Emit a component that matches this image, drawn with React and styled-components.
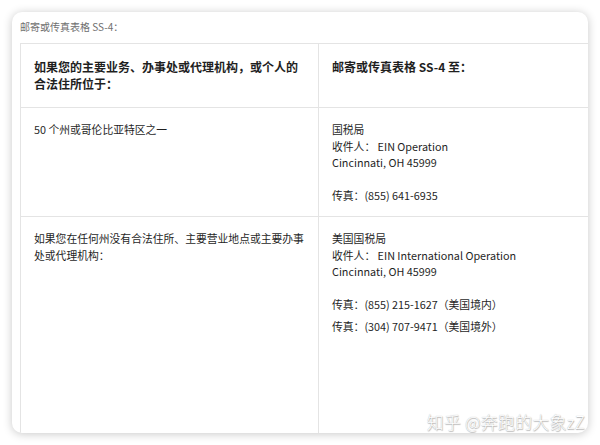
import React from "react";
import styled, { createGlobalStyle } from "styled-components";

const Global = createGlobalStyle`
  html, body { margin: 0; padding: 0; background: #ffffff; }
  body { font-family: "Noto Sans CJK SC", "Noto Sans", sans-serif; color: #1f1f1f; }
`;

const Page = styled.div`
  width: 600px;
  height: 445px;
  padding: 12px;
  box-sizing: border-box;
`;

const Card = styled.div`
  position: relative;
  height: 421px;
  border-radius: 10px;
  background: #fff;
  box-shadow: 0 1px 10px rgba(0, 0, 0, 0.22);
  overflow: hidden;
  display: flex;
  flex-direction: column;
  padding-left: 8px;
`;

const Caption = styled.div`
  font-size: 10px;
  line-height: 14px;
  color: #6f6f6f;
  padding: 8px 0 9px 0;
`;

const Table = styled.div`
  flex: 1;
  display: grid;
  grid-template-columns: 298px 1fr;
  grid-template-rows: 64px 109px 1fr;
`;

const Cell = styled.div`
  border-left: 1px solid #e4e4e4;
  border-top: 1px solid #e4e4e4;
  padding: ${(p) => (p.$head ? "14px 14px 0 13px" : "13px 14px 0 13px")};
  font-size: ${(p) => (p.$head ? "12px" : "10.8px")};
  font-weight: ${(p) => (p.$head ? 700 : 400)};
  line-height: ${(p) => (p.$head ? "17px" : "16.5px")};
  color: #1f1f1f;
`;

const Para = styled.p`
  margin: 0 0 ${(p) => p.$gap || 0}px 0;
`;

const Watermark = styled.div`
  position: absolute;
  right: 3px;
  bottom: 1px;
  font-size: 17px;
  line-height: 20px;
  font-weight: 300;
  color: #ffffff;
  letter-spacing: 0.2px;
  text-shadow: 0 0 1px #a8a8a8, 0.5px 0.5px 1px rgba(0, 0, 0, 0.3);
`;

export default function App() {
  return (
    <>
      <Global />
      <Page>
        <Card>
          <Caption>邮寄或传真表格 SS-4：</Caption>
          <Table>
            <Cell $head>如果您的主要业务、办事处或代理机构，或个人的合法住所位于：</Cell>
            <Cell $head>邮寄或传真表格 SS-4 至：</Cell>
            <Cell>50 个州或哥伦比亚特区之一</Cell>
            <Cell>
              <Para $gap={16}>
                国税局
                <br />
                收件人： EIN Operation
                <br />
                Cincinnati, OH 45999
              </Para>
              <Para>传真：(855) 641-6935</Para>
            </Cell>
            <Cell>如果您在任何州没有合法住所、主要营业地点或主要办事处或代理机构：</Cell>
            <Cell>
              <Para $gap={16}>
                美国国税局
                <br />
                收件人： EIN International Operation
                <br />
                Cincinnati, OH 45999
              </Para>
              <Para $gap={5.5}>传真：(855) 215-1627（美国境内）</Para>
              <Para>传真：(304) 707-9471（美国境外）</Para>
            </Cell>
          </Table>
          <Watermark>知乎 @奔跑的大象zZ</Watermark>
        </Card>
      </Page>
    </>
  );
}
